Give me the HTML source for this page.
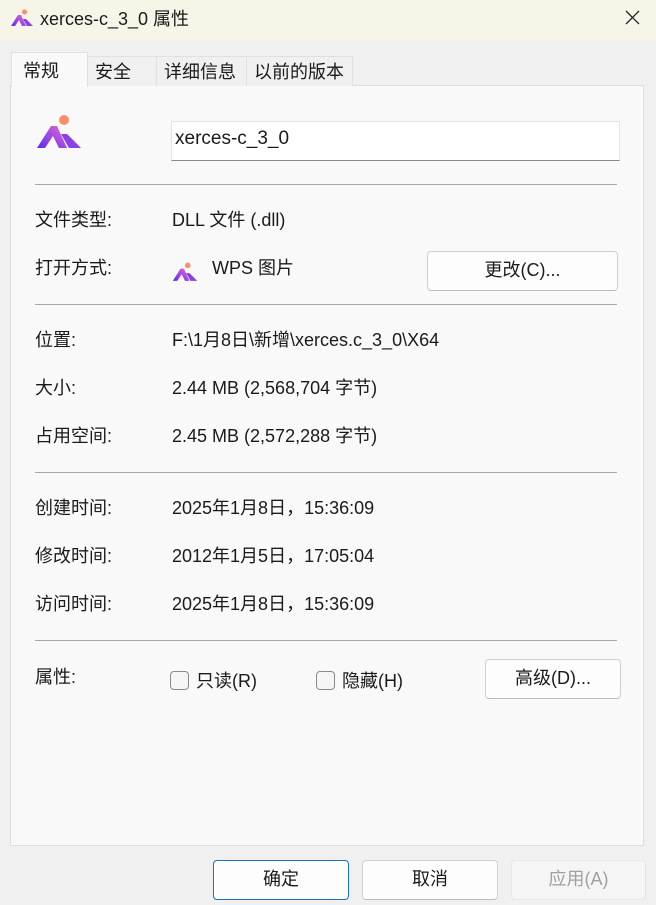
<!DOCTYPE html><html><head><meta charset="utf-8"><style>
body{margin:0;width:656px;height:905px;background:#f0f0f0;position:relative;overflow:hidden;font-family:"Liberation Sans","Noto Sans CJK SC",sans-serif;font-size:18px;color:#1a1a1a}
.a{position:absolute}
.t{position:absolute;line-height:24px;white-space:nowrap}
.sep{position:absolute;left:35px;width:582px;height:1px;background:#a8a8a8}
.btn{position:absolute;background:#fdfdfd;border:1px solid #d0d0d0;border-bottom-color:#bcbcbc;border-radius:4px;text-align:center;box-sizing:border-box;line-height:37px;font-size:18px}
.cb{position:absolute;width:17px;height:17px;border:1px solid #8a8a8a;border-radius:4px;background:#f5f5f5}
.tab{position:absolute;border:1px solid #e0e0e0;border-bottom:none;background:#f0f0f0;box-sizing:border-box;line-height:30px;padding-left:7px;font-size:18px}
</style></head><body>
<div class="a" style="left:0;top:0;width:656px;height:40px;background:#f6f5e8"></div>
<svg class="a" style="left:10px;top:9px" width="24" height="18" viewBox="0 0 48 36"><defs><linearGradient id="g" x1="0" y1="1" x2="1" y2="0"><stop offset="0" stop-color="#5a2cf0"/><stop offset="1" stop-color="#e96ad0"/></linearGradient></defs><circle cx="29" cy="6" r="5" fill="#fb8f6a"/><path d="M2 34 L16 12 L22 12 L32 34 L24 34 L18 22 L10 34Z" fill="url(#g)"/><path d="M26 20 L32 20 L46 34 L34 34Z" fill="#8a3fe8"/></svg>
<div class="t" style="left:40px;top:7px">xerces-c_3_0 属性</div>
<svg class="a" style="left:625px;top:10px" width="15" height="15" viewBox="0 0 15 15"><path d="M1 1L14 14M14 1L1 14" stroke="#222" stroke-width="1.3"/></svg>
<div class="a" style="left:10px;top:85px;width:632px;height:759px;background:#f9f9f9;border:1px solid #dedede"></div>
<div class="tab" style="left:87px;top:56px;width:70px;height:30px">安全</div>
<div class="tab" style="left:156px;top:56px;width:91px;height:30px">详细信息</div>
<div class="tab" style="left:246px;top:56px;width:107px;height:30px">以前的版本</div>
<div class="tab" style="left:11px;top:52px;width:77px;height:35px;background:#f9f9f9;line-height:36px;padding-left:11px">常规</div>
<svg class="a" style="left:35px;top:114px" width="48" height="36" viewBox="0 0 48 36"><circle cx="29" cy="6" r="5" fill="#fb8f6a"/><path d="M2 34 L16 12 L22 12 L32 34 L24 34 L18 22 L10 34Z" fill="url(#g)"/><path d="M26 20 L32 20 L46 34 L34 34Z" fill="#8a3fe8"/></svg>
<div class="a" style="left:171px;top:121px;width:449px;height:40px;background:#fff;border:1px solid #e4e4e4;border-bottom:1px solid #888;box-sizing:border-box"></div>
<div class="t" style="left:175px;top:127px;font-size:19px">xerces-c_3_0</div>
<div class="sep" style="top:184px"></div>
<div class="t" style="left:35px;top:208px">文件类型:</div><div class="t" style="left:172px;top:208px">DLL 文件 (.dll)</div>
<div class="t" style="left:35px;top:256px">打开方式:</div>
<svg class="a" style="left:171px;top:262px" width="28" height="20" viewBox="0 0 48 36"><circle cx="29" cy="6" r="5" fill="#fb8f6a"/><path d="M2 34 L16 12 L22 12 L32 34 L24 34 L18 22 L10 34Z" fill="url(#g)"/><path d="M26 20 L32 20 L46 34 L34 34Z" fill="#8a3fe8"/></svg>
<div class="t" style="left:212px;top:256px">WPS 图片</div>
<div class="btn" style="left:427px;top:251px;width:191px;height:40px">更改(C)...</div>
<div class="sep" style="top:304px"></div>
<div class="t" style="left:35px;top:328px">位置:</div><div class="t" style="left:172px;top:328px">F:\1月8日\新增\xerces.c_3_0\X64</div>
<div class="t" style="left:35px;top:376px">大小:</div><div class="t" style="left:172px;top:376px">2.44 MB (2,568,704 字节)</div>
<div class="t" style="left:35px;top:424px">占用空间:</div><div class="t" style="left:172px;top:424px">2.45 MB (2,572,288 字节)</div>
<div class="sep" style="top:472px"></div>
<div class="t" style="left:35px;top:496px">创建时间:</div><div class="t" style="left:172px;top:496px">2025年1月8日，15:36:09</div>
<div class="t" style="left:35px;top:544px">修改时间:</div><div class="t" style="left:172px;top:544px">2012年1月5日，17:05:04</div>
<div class="t" style="left:35px;top:592px">访问时间:</div><div class="t" style="left:172px;top:592px">2025年1月8日，15:36:09</div>
<div class="sep" style="top:640px"></div>
<div class="t" style="left:35px;top:665px">属性:</div>
<div class="cb" style="left:170px;top:671px"></div><div class="t" style="left:196px;top:669px">只读(R)</div>
<div class="cb" style="left:316px;top:671px"></div><div class="t" style="left:342px;top:669px">隐藏(H)</div>
<div class="btn" style="left:485px;top:659px;width:136px;height:40px">高级(D)...</div>
<div class="btn" style="left:213px;top:860px;width:136px;height:40px;border:1px solid #1a6fc8">确定</div>
<div class="btn" style="left:362px;top:860px;width:136px;height:40px">取消</div>
<div class="btn" style="left:511px;top:860px;width:135px;height:40px;background:#f5f5f5;border-color:#e6e6e6;color:#a0a0a0">应用(A)</div>
</body></html>
